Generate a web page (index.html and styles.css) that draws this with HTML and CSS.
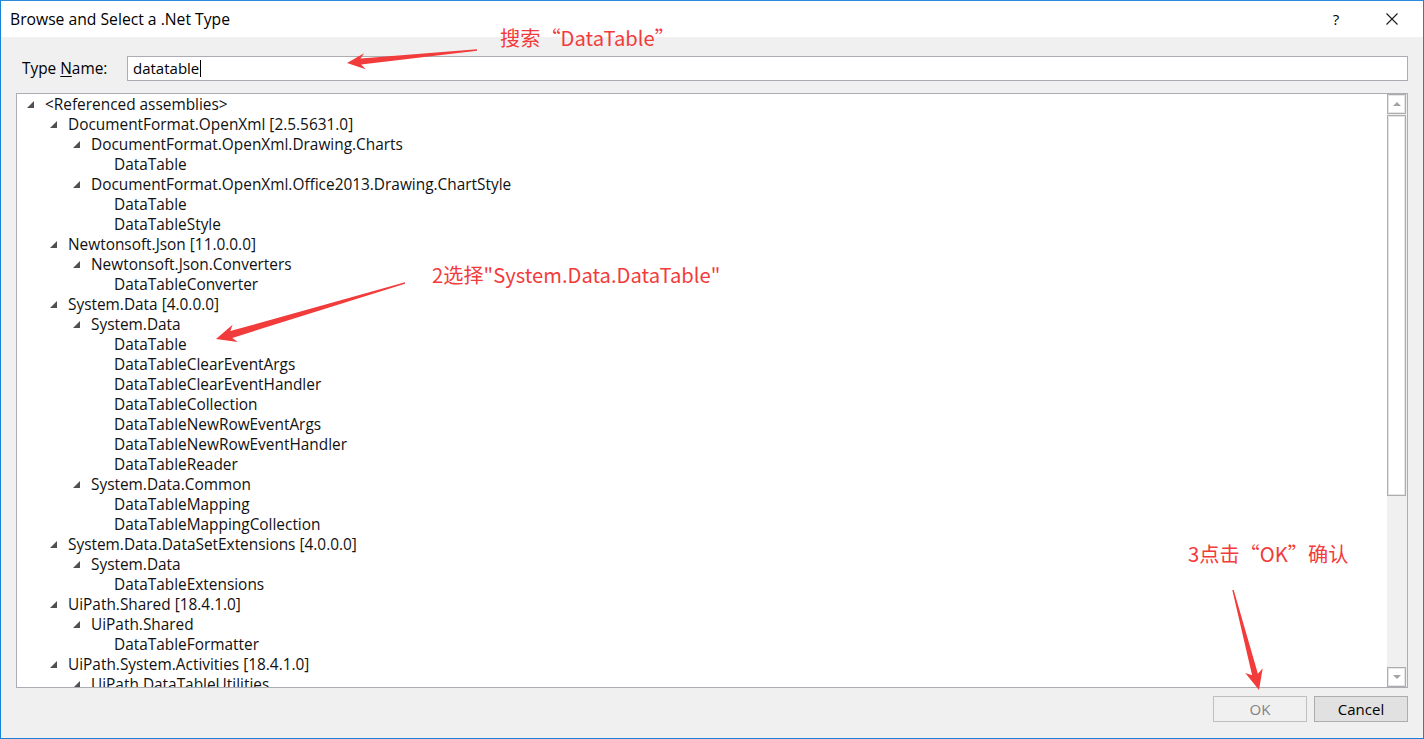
FILE: index.html
```html
<!DOCTYPE html>
<html>
<head>
   <title>Browse and Select a .Net Type</title>
   <link rel="stylesheet" href="styles.css">
</head>
<body>
   <div class="window">
       <div class="titlebar">
           <span class="title">Browse and Select a .Net Type</span>
           <span class="help-btn">?</span>
           <span class="close-btn">
               <svg width="12" height="12" viewBox="0 0 12 12"><path d="M0.5 0.5 L11.5 11.5 M11.5 0.5 L0.5 11.5" stroke="#1a1a1a" stroke-width="1.1" fill="none"/></svg>
           </span>
       </div>

       <div class="content">
           <div class="type-row">
               <label class="type-label">Type <u>N</u>ame:</label>
               <div class="type-input">datatable<span class="caret"></span></div>
           </div>

           <div class="tree-box">
               <div class="tree">
                   <div class="tree-row lvl-0"><span class="expander open"></span><span>&lt;Referenced assemblies&gt;</span></div>
                   <div class="tree-row lvl-1"><span class="expander open"></span><span>DocumentFormat.OpenXml [2.5.5631.0]</span></div>
                   <div class="tree-row lvl-2"><span class="expander open"></span><span>DocumentFormat.OpenXml.Drawing.Charts</span></div>
                   <div class="tree-row lvl-3"><span class="expander"></span><span>DataTable</span></div>
                   <div class="tree-row lvl-2"><span class="expander open"></span><span>DocumentFormat.OpenXml.Office2013.Drawing.ChartStyle</span></div>
                   <div class="tree-row lvl-3"><span class="expander"></span><span>DataTable</span></div>
                   <div class="tree-row lvl-3"><span class="expander"></span><span>DataTableStyle</span></div>
                   <div class="tree-row lvl-1"><span class="expander open"></span><span>Newtonsoft.Json [11.0.0.0]</span></div>
                   <div class="tree-row lvl-2"><span class="expander open"></span><span>Newtonsoft.Json.Converters</span></div>
                   <div class="tree-row lvl-3"><span class="expander"></span><span>DataTableConverter</span></div>
                   <div class="tree-row lvl-1"><span class="expander open"></span><span>System.Data [4.0.0.0]</span></div>
                   <div class="tree-row lvl-2"><span class="expander open"></span><span>System.Data</span></div>
                   <div class="tree-row lvl-3"><span class="expander"></span><span>DataTable</span></div>
                   <div class="tree-row lvl-3"><span class="expander"></span><span>DataTableClearEventArgs</span></div>
                   <div class="tree-row lvl-3"><span class="expander"></span><span>DataTableClearEventHandler</span></div>
                   <div class="tree-row lvl-3"><span class="expander"></span><span>DataTableCollection</span></div>
                   <div class="tree-row lvl-3"><span class="expander"></span><span>DataTableNewRowEventArgs</span></div>
                   <div class="tree-row lvl-3"><span class="expander"></span><span>DataTableNewRowEventHandler</span></div>
                   <div class="tree-row lvl-3"><span class="expander"></span><span>DataTableReader</span></div>
                   <div class="tree-row lvl-2"><span class="expander open"></span><span>System.Data.Common</span></div>
                   <div class="tree-row lvl-3"><span class="expander"></span><span>DataTableMapping</span></div>
                   <div class="tree-row lvl-3"><span class="expander"></span><span>DataTableMappingCollection</span></div>
                   <div class="tree-row lvl-1"><span class="expander open"></span><span>System.Data.DataSetExtensions [4.0.0.0]</span></div>
                   <div class="tree-row lvl-2"><span class="expander open"></span><span>System.Data</span></div>
                   <div class="tree-row lvl-3"><span class="expander"></span><span>DataTableExtensions</span></div>
                   <div class="tree-row lvl-1"><span class="expander open"></span><span>UiPath.Shared [18.4.1.0]</span></div>
                   <div class="tree-row lvl-2"><span class="expander open"></span><span>UiPath.Shared</span></div>
                   <div class="tree-row lvl-3"><span class="expander"></span><span>DataTableFormatter</span></div>
                   <div class="tree-row lvl-1"><span class="expander open"></span><span>UiPath.System.Activities [18.4.1.0]</span></div>
                   <div class="tree-row lvl-2"><span class="expander open"></span><span>UiPath.DataTableUtilities</span></div>
               </div>

               <div class="scrollbar">
                   <div class="scroll-btn"><span class="arrow-up"></span></div>
                   <div class="scroll-track">
                       <div class="scroll-thumb"></div>
                   </div>
                   <div class="scroll-btn"><span class="arrow-down"></span></div>
               </div>
           </div>

           <div class="button-row">
               <button class="btn" disabled>OK</button>
               <button class="btn">Cancel</button>
           </div>
       </div>

       <!-- annotations drawn over the dialog -->
       <svg class="marks" width="1424" height="739" viewBox="0 0 1424 739">
           <polygon points="477,49.3 360.6,58.6 364.1,53.2 347,63 365.7,69.2 361.2,64.6 477,50.7" fill="#f23b3b"/>
           <polygon points="405,282.3 230.3,331.1 232.6,324.7 216,339 237.8,341.9 232.3,337.9 405,283.7" fill="#f23b3b"/>
           <polygon points="1232.3,590 1252.1,675.3 1245.3,672.9 1259,690 1262.7,668.3 1257.9,673.7 1233.7,590" fill="#f23b3b"/>
       </svg>
       <span class="note note-search">搜索“DataTable”</span>
       <span class="note note-select">2选择"System.Data.DataTable"</span>
       <span class="note note-ok">3点击“OK”确认</span>
   </div>
</body>
</html>
```

FILE: styles.css
```css
* {
    margin: 0;
    padding: 0;
    box-sizing: border-box;
}

body {
    font-family: 'Open Sans', 'Noto Sans', sans-serif;
    background: #F0F0F0;
    color: #000000;
}

.window {
    position: relative;
    width: 1424px;
    height: 739px;
    border: 1px solid #1883D7;
    border-top-color: #2B8ADB;
    background: #F0F0F0;
    display: flex;
    flex-direction: column;
    overflow: hidden;
}

.titlebar {
    height: 36px;
    background: #FFFFFF;
    display: flex;
    align-items: center;
    padding-left: 9px;
    font-size: 15.7px;
    color: #000000;
}

.title {
    flex: 1;
}

.help-btn {
    width: 46px;
    text-align: center;
    font-size: 15px;
    margin-right: 10px;
}

.close-btn {
    width: 46px;
    height: 36px;
    display: flex;
    align-items: center;
    justify-content: center;
    margin-right: 8px;
}

.content {
    flex: 1;
    display: flex;
    flex-direction: column;
    padding: 19px 15px 16px 15px;
}

.type-row {
    display: flex;
    align-items: center;
    height: 25px;
    margin-bottom: 12px;
}

.type-label {
    width: 111px;
    padding-left: 6px;
    font-size: 15.4px;
}

.type-label u {
    text-underline-offset: 2px;
}

.type-input {
    flex: 1;
    height: 25px;
    background: #FFFFFF;
    border: 1px solid #ABADB3;
    font-size: 15px;
    line-height: 23px;
    padding-left: 5px;
    display: flex;
    align-items: center;
}

.caret {
    display: inline-block;
    width: 1px;
    height: 17px;
    background: #000000;
    margin-left: 1px;
}

.tree-box {
    height: 595px;
    background: #FFFFFF;
    border: 1px solid #ABADB3;
    display: flex;
    overflow: hidden;
}

.tree {
    flex: 1;
    overflow: hidden;
    font-size: 15.4px;
}

.tree-row {
    height: 20px;
    display: flex;
    align-items: center;
    white-space: nowrap;
    color: #111111;
}

.lvl-0 { padding-left: 5px; }
.lvl-1 { padding-left: 28px; }
.lvl-2 { padding-left: 51px; }
.lvl-3 { padding-left: 74px; }

.expander {
    width: 16px;
    height: 20px;
    margin-right: 7px;
    display: flex;
    align-items: center;
    justify-content: center;
}

.expander.open::before {
    content: '';
    width: 0;
    height: 0;
    border-left: 7px solid transparent;
    border-bottom: 7px solid #505050;
    margin-top: 1px;
}

.scrollbar {
    width: 20px;
    background: #F0F0F0;
    display: flex;
    flex-direction: column;
    padding: 0 1px 0 0;
}

.scroll-btn {
    height: 20px;
    background: #FFFFFF;
    border: 1px solid #ADADAD;
    box-shadow: inset 0 0 0 1px #E6E6E6;
    display: flex;
    align-items: center;
    justify-content: center;
}

.arrow-up {
    width: 0;
    height: 0;
    border-left: 4px solid transparent;
    border-right: 4px solid transparent;
    border-bottom: 4px solid #A3A3A3;
}

.arrow-down {
    width: 0;
    height: 0;
    border-left: 4px solid transparent;
    border-right: 4px solid transparent;
    border-top: 4px solid #A3A3A3;
}

.scroll-track {
    flex: 1;
    padding: 1px 0;
}

.scroll-thumb {
    height: 381px;
    background: #FFFFFF;
    border: 1px solid #ADADAD;
    box-shadow: inset 0 0 0 1px #E6E6E6;
}

.button-row {
    display: flex;
    justify-content: flex-end;
    gap: 7px;
    margin-top: 8px;
}

.btn {
    width: 94px;
    height: 26px;
    font-family: 'Open Sans', 'Noto Sans', sans-serif;
    font-size: 15px;
    background: #E1E1E1;
    border: 1px solid #ADADAD;
    color: #000000;
}

.btn:disabled {
    background: #F0F0F0;
    border-color: #BFBFBF;
    color: #838383;
}

.marks {
    position: absolute;
    left: -1px;
    top: -1px;
    pointer-events: none;
}

.note {
    position: absolute;
    font-family: 'Noto Sans CJK SC', 'Noto Sans', sans-serif;
    font-size: 20.2px;
    line-height: 24px;
    color: #F23B3B;
    white-space: nowrap;
}

.note-search {
    left: 499px;
    top: 25px;
}

.note-select {
    left: 431px;
    top: 262px;
}

.note-ok {
    left: 1187px;
    top: 541px;
}
```
